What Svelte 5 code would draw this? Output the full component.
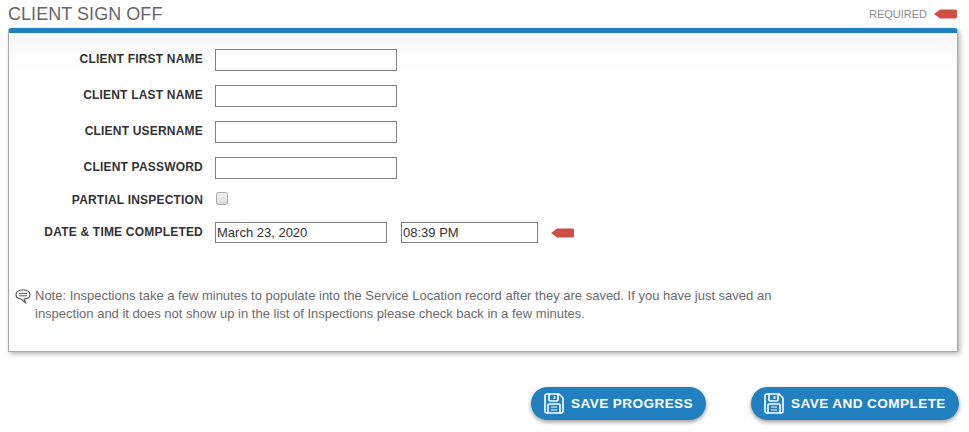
<script>
    let firstName = $state("")
    let lastName = $state("")
    let username = $state("")
    let password = $state("")
    let partial = $state(false)
    let date = $state("March 23, 2020")
    let time = $state("08:39 PM")
</script>

{#snippet tag()}
    <svg class="tag" width="23" height="10" viewBox="0 0 23 10">
        <path d="M0 5 L6 0.5 H21.5 Q23 0.5 23 2 V8 Q23 9.5 21.5 9.5 H6 Z" fill="#cf4f45" />
    </svg>
{/snippet}

{#snippet disk()}
    <svg class="disk" width="20" height="21" viewBox="0 0 20 21" fill="none" stroke="#fff" stroke-width="1.6">
        <path d="M3 1 H15 L19 5 V18 Q19 20 17 20 H3 Q1 20 1 18 V3 Q1 1 3 1 Z" />
        <path d="M5 1 V7 Q5 8 6 8 H13 Q14 8 14 7 V1" />
        <path d="M10.5 3 V6" />
        <path d="M4 20 V12 Q4 11 5 11 H15 Q16 11 16 12 V20" />
        <path d="M7 14 H13 M7 17 H13" stroke-width="1.2" />
    </svg>
{/snippet}

<div class="page">
    <header class="top">
        <h2>CLIENT SIGN OFF</h2>
        <div class="required">REQUIRED {@render tag()}</div>
    </header>

    <section class="panel">
        <form class="fields">
            <label for="first">CLIENT FIRST NAME</label>
            <div><input id="first" class="text" bind:value={firstName} /></div>

            <label for="last">CLIENT LAST NAME</label>
            <div><input id="last" class="text" bind:value={lastName} /></div>

            <label for="user">CLIENT USERNAME</label>
            <div><input id="user" class="text" bind:value={username} /></div>

            <label for="pass">CLIENT PASSWORD</label>
            <div><input id="pass" class="text" type="password" bind:value={password} /></div>

            <label for="partial">PARTIAL INSPECTION</label>
            <div><input id="partial" class="check" type="checkbox" bind:checked={partial} /></div>

            <label for="date">DATE &amp; TIME COMPLETED</label>
            <div class="when">
                <input id="date" class="text date" bind:value={date} />
                <input class="text time" bind:value={time} />
                {@render tag()}
            </div>
        </form>

        <div class="note">
            <svg class="bubble" width="16" height="15" viewBox="0 0 16 15" fill="none" stroke="#555" stroke-width="1.2">
                <path d="M8 1 C12 1 15 2.8 15 5.6 C15 8.2 12.4 10 9.2 10 L10.4 13.6 L6 10 C3 9.8 1 8 1 5.6 C1 2.8 4 1 8 1 Z" />
                <path d="M4 4.4 H12 M4 6.8 H12" stroke-width="1" />
            </svg>
            <p>Note: Inspections take a few minutes to populate into the Service Location record after they are saved. If you have just saved an inspection and it does not show up in the list of Inspections please check back in a few minutes.</p>
        </div>
    </section>

    <div class="actions">
        <button type="button" class="progress">{@render disk()} SAVE PROGRESS</button>
        <button type="button" class="complete">{@render disk()} SAVE AND COMPLETE</button>
    </div>
</div>

<style>
    :global(body){
        margin: 0;
        background-color: #fff;
    }
    .page{
        width: 969px;
        height: 432px;
        overflow: hidden;
        box-sizing: border-box;
        padding: 0 11px 0 8px;
        font-family: "Liberation Sans", Arial, sans-serif;
    }
    .top{
        height: 28px;
        display: flex;
        justify-content: space-between;
        align-items: center;
    }
    h2{
        margin: 0;
        font-size: 18px;
        font-weight: normal;
        letter-spacing: 0.05px;
        color: #666;
    }
    .required{
        display: flex;
        align-items: center;
        gap: 7px;
        padding-right: 1px;
        font-size: 11px;
        color: #8c8c8c;
    }
    .panel{
        height: 324px;
        box-sizing: border-box;
        border: 1px solid #aaa;
        border-top: 5px solid #2080c0;
        border-radius: 4px 4px 0 0;
        background: linear-gradient(#f8f8f8, #fff 40px);
        box-shadow: 2px 2px 5px rgba(0, 0, 0, 0.3);
        padding-top: 16px;
    }
    .fields{
        display: grid;
        grid-template-columns: 194px 1fr;
        column-gap: 12px;
        grid-template-rows: 36px 36px 36px 33px 32px 22px;
    }
    .fields > div{
        display: flex;
        align-items: flex-start;
    }
    label{
        text-align: right;
        font-size: 12px;
        font-weight: bold;
        color: #333;
        letter-spacing: 0.2px;
        line-height: 20px;
    }
    .text{
        box-sizing: border-box;
        height: 22px;
        width: 182px;
        margin: 0;
        padding: 0 1px;
        border: 1px solid #808080;
        background-color: #fff;
        font-family: inherit;
        font-size: 13px;
        color: #333;
        outline: none;
    }
    .check{
        appearance: none;
        box-sizing: border-box;
        width: 12px;
        height: 13px;
        margin: 2px 0 0 1px;
        border: 1px solid #aaa;
        border-radius: 3px;
        background: linear-gradient(#f2f2f2, #dcdcdc);
    }
    .when{
        gap: 14px;
    }
    .date{
        width: 172px;
        height: 21px;
    }
    .time{
        width: 137px;
        height: 21px;
    }
    .tag{
        flex: none;
    }
    .when .tag{
        margin: 6px 0 0 -1px;
    }
    .note{
        display: flex;
        gap: 4px;
        margin: 43px 0 0 6px;
    }
    .bubble{
        flex: none;
        margin-top: 2px;
    }
    p{
        margin: 0;
        width: 760px;
        font-size: 13px;
        line-height: 18px;
        color: #6b6b6b;
    }
    .actions{
        display: flex;
        justify-content: flex-end;
        gap: 45px;
        margin: 35px -1px 0 0;
    }
    button{
        height: 33px;
        display: flex;
        align-items: center;
        gap: 7px;
        padding: 0 0 0 13px;
        border: none;
        border-radius: 17px;
        background-color: #2080c0;
        box-shadow: 0 2px 4px rgba(0, 0, 0, 0.4);
        font-family: inherit;
        font-size: 13.6px;
        font-weight: bold;
        letter-spacing: 0.4px;
        white-space: nowrap;
        color: #fff;
    }
    .progress{
        width: 175px;
    }
    .complete{
        width: 208px;
    }
</style>
